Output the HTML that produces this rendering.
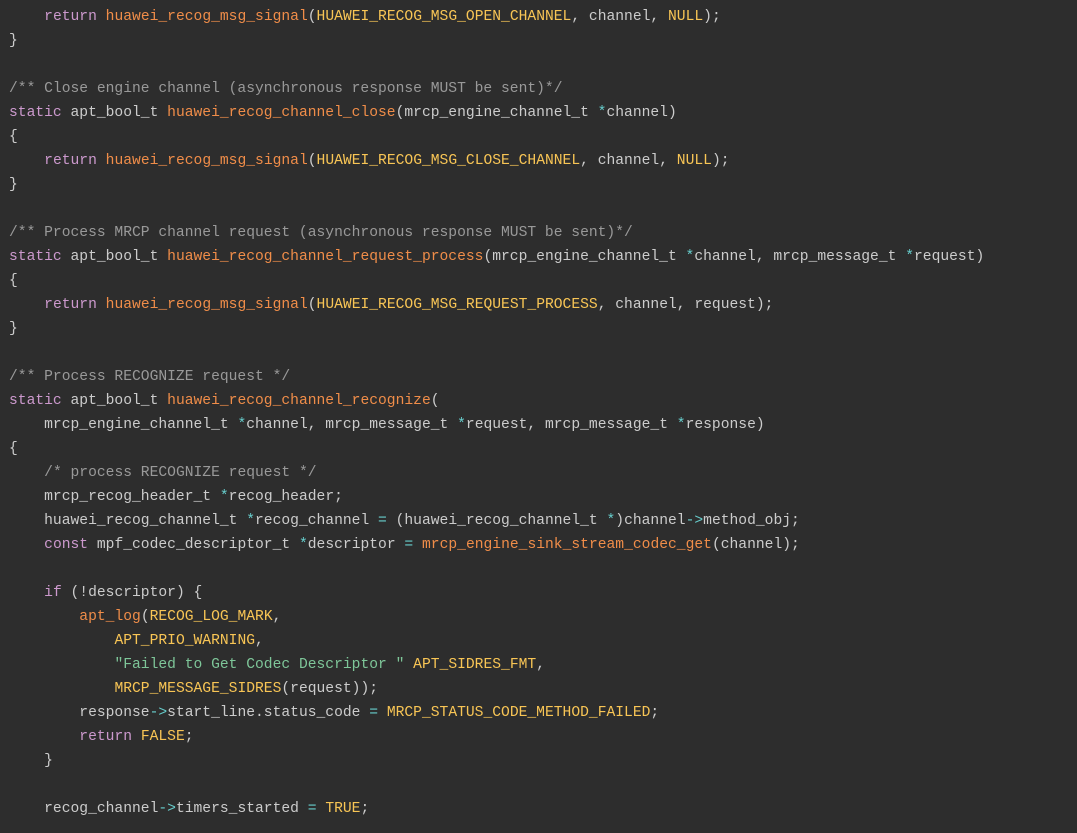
<!DOCTYPE html>
<html><head><meta charset="utf-8"><style>
html,body{margin:0;padding:0;background:#2d2d2d;width:1077px;height:833px;overflow:hidden}
pre{margin:0;position:absolute;left:9px;top:5px;font-family:"Liberation Mono",monospace;font-size:14.65px;line-height:24px;color:#cccccc;white-space:pre}
.k{color:#cc99cd}.f{color:#f08d49}.c{color:#999999}.m{color:#f8c555}.o{color:#67cdcc}.s{color:#7ec699}
</style></head><body><pre>    <span class="k">return</span> <span class="f">huawei_recog_msg_signal</span>(<span class="m">HUAWEI_RECOG_MSG_OPEN_CHANNEL</span>, channel, <span class="m">NULL</span>);
}

<span class="c">/** Close engine channel (asynchronous response MUST be sent)*/</span>
<span class="k">static</span> apt_bool_t <span class="f">huawei_recog_channel_close</span>(mrcp_engine_channel_t <span class="o">*</span>channel)
{
    <span class="k">return</span> <span class="f">huawei_recog_msg_signal</span>(<span class="m">HUAWEI_RECOG_MSG_CLOSE_CHANNEL</span>, channel, <span class="m">NULL</span>);
}

<span class="c">/** Process MRCP channel request (asynchronous response MUST be sent)*/</span>
<span class="k">static</span> apt_bool_t <span class="f">huawei_recog_channel_request_process</span>(mrcp_engine_channel_t <span class="o">*</span>channel, mrcp_message_t <span class="o">*</span>request)
{
    <span class="k">return</span> <span class="f">huawei_recog_msg_signal</span>(<span class="m">HUAWEI_RECOG_MSG_REQUEST_PROCESS</span>, channel, request);
}

<span class="c">/** Process RECOGNIZE request */</span>
<span class="k">static</span> apt_bool_t <span class="f">huawei_recog_channel_recognize</span>(
    mrcp_engine_channel_t <span class="o">*</span>channel, mrcp_message_t <span class="o">*</span>request, mrcp_message_t <span class="o">*</span>response)
{
    <span class="c">/* process RECOGNIZE request */</span>
    mrcp_recog_header_t <span class="o">*</span>recog_header;
    huawei_recog_channel_t <span class="o">*</span>recog_channel <span class="o">=</span> (huawei_recog_channel_t <span class="o">*</span>)channel<span class="o">-&gt;</span>method_obj;
    <span class="k">const</span> mpf_codec_descriptor_t <span class="o">*</span>descriptor <span class="o">=</span> <span class="f">mrcp_engine_sink_stream_codec_get</span>(channel);

    <span class="k">if</span> (!descriptor) {
        <span class="f">apt_log</span>(<span class="m">RECOG_LOG_MARK</span>,
            <span class="m">APT_PRIO_WARNING</span>,
            <span class="s">"Failed to Get Codec Descriptor "</span> <span class="m">APT_SIDRES_FMT</span>,
            <span class="m">MRCP_MESSAGE_SIDRES</span>(request));
        response<span class="o">-&gt;</span>start_line.status_code <span class="o">=</span> <span class="m">MRCP_STATUS_CODE_METHOD_FAILED</span>;
        <span class="k">return</span> <span class="m">FALSE</span>;
    }

    recog_channel<span class="o">-&gt;</span>timers_started <span class="o">=</span> <span class="m">TRUE</span>;
</pre></body></html>
